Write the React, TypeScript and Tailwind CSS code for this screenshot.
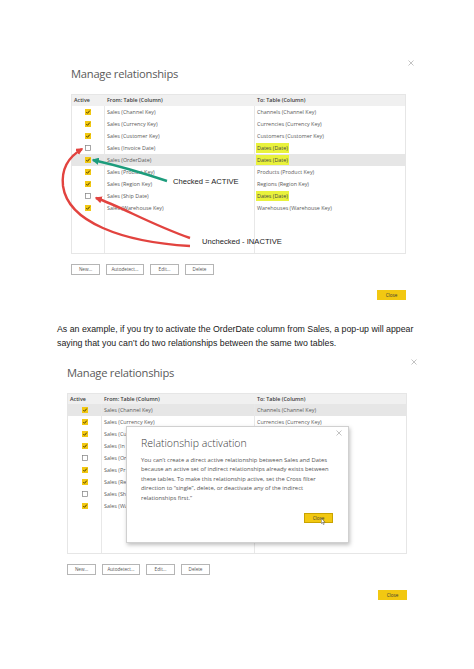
import type { ReactNode } from 'react'

type Row = { from: string; to: string; on: boolean; hl?: boolean; date?: boolean }

const names: [string, string][] = [
  ['Sales (Channel Key)', 'Channels (Channel Key)'],
  ['Sales (Currency Key)', 'Currencies (Currency Key)'],
  ['Sales (Customer Key)', 'Customers (Customer Key)'],
  ['Sales (Invoice Date)', 'Dates (Date)'],
  ['Sales (OrderDate)', 'Dates (Date)'],
  ['Sales (Product Key)', 'Products (Product Key)'],
  ['Sales (Region Key)', 'Regions (Region Key)'],
  ['Sales (Ship Date)', 'Dates (Date)'],
  ['Sales (Warehouse Key)', 'Warehouses (Warehouse Key)'],
]

// first screenshot: invoice + ship inactive, order highlighted, dates marked
const rows1: Row[] = names.map(([from, to], i) => ({
  from,
  to,
  on: i !== 3 && i !== 7,
  hl: i === 4,
  date: i === 3 || i === 4 || i === 7,
}))

// second screenshot: order + ship inactive, first row selected.
// rows 3..9 sit under the pop-up, only their first letters show
const rows2: Row[] = names.map(([from, to], i) => ({
  from: i >= 2 ? from.slice(0, 9) : from,
  to: i >= 2 ? '' : to,
  on: i !== 4 && i !== 7,
  hl: i === 0,
}))

const ui = "font-['Open_Sans','Noto_Sans',sans-serif]"

function Check({ on }: { on: boolean }) {
  if (!on)
    return (
      <svg width="6" height="6" viewBox="0 0 6 6">
        <rect x="0.4" y="0.4" width="5.2" height="5.2" fill="#fff" stroke="#808080" strokeWidth="0.7" />
      </svg>
    )
  return (
    <svg width="6" height="6" viewBox="0 0 6 6">
      <rect width="6" height="6" fill="#f2c811" />
      <path d="M1.3 3.1 L2.5 4.3 L4.8 1.6" stroke="#3b3000" strokeWidth="0.9" fill="none" />
    </svg>
  )
}

function CloseX({ size = 6 }: { size?: number }) {
  return (
    <svg width={size} height={size} viewBox="0 0 6 6">
      <path d="M0.5 0.5 L5.5 5.5 M5.5 0.5 L0.5 5.5" stroke="#9a9a9a" strokeWidth="0.6" />
    </svg>
  )
}

function Btn({ w, children }: { w: string; children: ReactNode }) {
  return (
    <div className={`${w} h-[11px] border border-[#b5b5b5] bg-white flex items-center justify-center text-[4.6px] text-[#555]`}>
      {children}
    </div>
  )
}

type DialogProps = {
  outer: string
  tableW: string
  c1: string
  c2: string
  head: string
  filler: string
  rows: Row[]
}

function Dialog({ outer, tableW, c1, c2, head, filler, rows }: DialogProps) {
  return (
    <div className={`${outer} ${ui}`}>
      <div className="flex justify-end h-[8px] items-center">
        <CloseX />
      </div>
      <div className="text-[11.2px] leading-[14px] text-[#5a5a5a] tracking-[-0.25px]">Manage relationships</div>

      <div className={`${tableW} mt-[13px] border border-[#e6e6e6] flex flex-col text-[5.4px] text-[#5a5a5a]`}>
        <div className={`${head} flex bg-[#f0f0f0] font-semibold text-[#3a3a3a]`}>
          <div className={`${c1} pl-[2px] flex items-center`}>Active</div>
          <div className={`${c2} pl-[2px] flex items-center`}>From: Table (Column)</div>
          <div className="flex-1 pl-[2px] flex items-center">To: Table (Column)</div>
        </div>
        {rows.map((r, i) => (
          <div key={i} className={`h-[12px] flex ${r.hl ? 'bg-[#e6e6e6]' : ''}`}>
            <div className={`${c1} border-r border-[#e8e8e8] flex items-center justify-center`}>
              <Check on={r.on} />
            </div>
            <div className={`${c2} border-r border-[#e8e8e8] pl-[2px] flex items-center whitespace-nowrap`}>{r.from}</div>
            <div className="flex-1 pl-[1px] flex items-center whitespace-nowrap">
              {r.date ? <span className="bg-[#e9f23c] px-[1px] py-[1px] text-[#444]">{r.to}</span> : <span className="pl-[1px]">{r.to}</span>}
            </div>
          </div>
        ))}
        <div className={`${filler} flex`}>
          <div className={`${c1} border-r border-[#e8e8e8]`} />
          <div className={`${c2} border-r border-[#e8e8e8]`} />
          <div className="flex-1" />
        </div>
      </div>

      <div className="mt-[10px] flex gap-[6px]">
        <Btn w="w-[29px]">New...</Btn>
        <Btn w="w-[38px]">Autodetect...</Btn>
        <Btn w="w-[29px]">Edit...</Btn>
        <Btn w="w-[29px]">Delete</Btn>
      </div>

      <div className={`${tableW} mt-[15px] flex justify-end`}>
        <div className="w-[29px] h-[10px] bg-[#f2c811] flex items-center justify-center text-[4.6px] text-[#3a3a3a]">Close</div>
      </div>
    </div>
  )
}

export default function App() {
  return (
    <div className="relative w-[474px] h-[669px] bg-white overflow-hidden">
      <div className="pt-[59px]">
        <Dialog
          outer="ml-[71px] w-[343px]"
          tableW="w-[335px]"
          c1="w-[33px]"
          c2="w-[150px]"
          head="h-[11px]"
          filler="h-[39px]"
          rows={rows1}
        />
      </div>

      <p className="mt-[22px] pl-[57px] text-[8.8px] leading-[14px] text-[#1a1a1a] font-['Liberation_Sans',Arial,sans-serif]">
        As an example, if you try to activate the OrderDate column from Sales, a pop-up will appear
        <br />
        saying that you can’t do two relationships between the same two tables.
      </p>

      <div className="mt-[8px]">
        <Dialog
          outer="ml-[67px] w-[350px]"
          tableW="w-[340px]"
          c1="w-[34px]"
          c2="w-[153px]"
          head="h-[10px]"
          filler="h-[41px]"
          rows={rows2}
        />
      </div>

      {/* annotations over the first screenshot */}
      <svg className="absolute left-0 top-0 pointer-events-none" width="474" height="669" viewBox="0 0 474 669">
        <defs>
          <marker id="ar" viewBox="0 0 10 10" refX="8" refY="5" markerWidth="3" markerHeight="3" orient="auto">
            <path d="M0 0 L10 5 L0 10 z" fill="#e2433f" />
          </marker>
          <marker id="ag" viewBox="0 0 10 10" refX="8" refY="5" markerWidth="3" markerHeight="3" orient="auto">
            <path d="M0 0 L10 5 L0 10 z" fill="#1d9c7c" />
          </marker>
        </defs>
        <path d="M190 246 C 122 242 68 222 63 186 C 61 168 70 156 82 149" stroke="#e2433f" strokeWidth="2.4" fill="none" markerEnd="url(#ar)" />
        <path d="M190 238 C 150 224 120 206 96 198" stroke="#e2433f" strokeWidth="2.4" fill="none" markerEnd="url(#ar)" />
        <path d="M167 181 C 140 172 115 165 93 160" stroke="#1d9c7c" strokeWidth="2.4" fill="none" markerEnd="url(#ag)" />
      </svg>
      <div className="absolute left-[173px] top-[177px] text-[7.6px] leading-[10px] font-medium text-[#222] font-['Liberation_Sans',Arial,sans-serif]">
        Checked = ACTIVE
      </div>
      <div className="absolute left-[202px] top-[237px] text-[7.6px] leading-[10px] font-medium text-[#222] font-['Liberation_Sans',Arial,sans-serif]">
        Unchecked - INACTIVE
      </div>

      {/* activation pop-up over the second screenshot */}
      <div className={`absolute left-[126px] top-[426px] w-[223px] h-[117px] bg-white border border-[#d0d0d0] shadow-[1px_2px_4px_rgba(0,0,0,0.25)] ${ui}`}>
        <div className="flex justify-end pr-[6px] pt-[3px] h-[9px]">
          <CloseX />
        </div>
        <div className="pl-[14px] text-[10.5px] leading-[14px] font-light text-[#3a3a3a]">Relationship activation</div>
        <div className="pl-[14px] mt-[6px] text-[5.85px] leading-[9.4px] text-[#555] whitespace-nowrap">
          You can’t create a direct active relationship between Sales and Dates
          <br />
          because an active set of indirect relationships already exists between
          <br />
          these tables. To make this relationship active, set the Cross filter
          <br />
          direction to “single”, delete, or deactivate any of the indirect
          <br />
          relationships first.”
        </div>
        <div className="flex justify-end pr-[15px] mt-[10px]">
          <div className="relative w-[29px] h-[10px] bg-[#f2c811] border border-[#c9a300] flex items-center justify-center text-[4.6px] text-[#3a3a3a]">
            Close
            <svg className="absolute left-[16px] top-[4px]" width="5" height="7" viewBox="0 0 5 7">
              <path d="M0.3 0.3 L0.3 5.6 L1.5 4.5 L2.4 6.6 L3.2 6.2 L2.3 4.2 L4 4.2 Z" fill="#fff" stroke="#222" strokeWidth="0.4" />
            </svg>
          </div>
        </div>
      </div>
    </div>
  )
}
